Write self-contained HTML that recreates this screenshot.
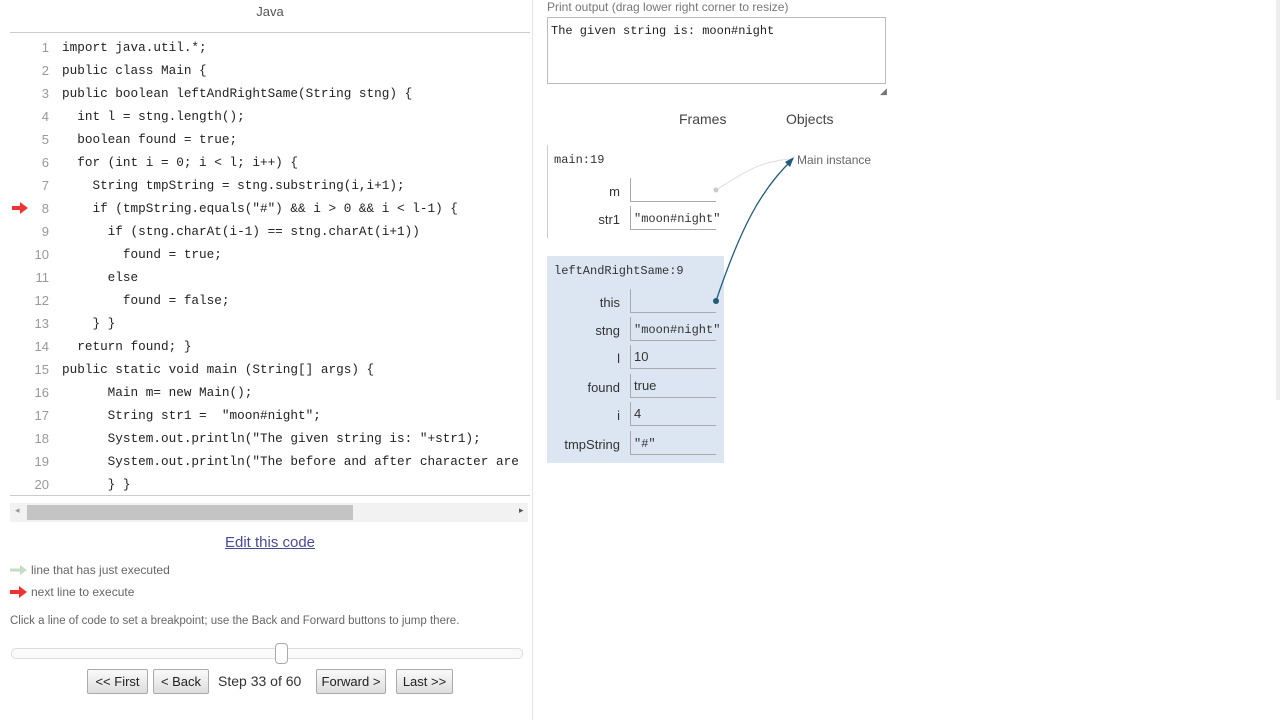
<!DOCTYPE html>
<html><head><style>
body{margin:0;width:1280px;height:720px;background:#fff;font-family:"Liberation Sans",sans-serif;position:relative;overflow:hidden;color:#333}
.a{position:absolute}
.code{font-family:"Liberation Mono",monospace;font-size:12.7px;color:#222}
.ln{position:absolute;left:20px;width:29px;text-align:right;font-family:"Liberation Sans",sans-serif;font-size:13px;color:#999}
.cl{position:absolute;left:62px;white-space:pre}
.btn{position:absolute;top:669px;height:23px;border:1px solid #aaa;background:linear-gradient(#fafafa,#ddd);font-size:13px;line-height:23px;text-align:center;color:#222;border-radius:2px}
.lab{position:absolute;width:70px;text-align:right;font-size:13px;color:#333}
.val{position:absolute;left:630px;width:86px;height:24px;border-left:1px solid #aaa;border-bottom:1px solid #aaa;font-size:13px;line-height:24px;padding-left:3px;box-sizing:border-box}
.mono{font-family:"Liberation Mono",monospace;font-size:12px}
</style></head><body>
<div class="a" style="left:0;top:4px;width:540px;text-align:center;font-size:13px;color:#555">Java</div>
<div class="a" style="left:10px;top:32px;width:520px;height:1px;background:#ccc"></div>
<div class="a" style="left:532px;top:0;width:1px;height:720px;background:#e4e4e4"></div>
<div class="a" style="left:1276px;top:0;width:4px;height:400px;background:#eee"></div>
<div class="code a" style="left:0;top:36px;line-height:23px;width:530px;height:459px;overflow:hidden">
<div class="ln" style="top:0">1</div><div class="cl" style="top:0">import java.util.*;</div>
<div class="ln" style="top:23px">2</div><div class="cl" style="top:23px">public class Main {</div>
<div class="ln" style="top:46px">3</div><div class="cl" style="top:46px">public boolean leftAndRightSame(String stng) {</div>
<div class="ln" style="top:69px">4</div><div class="cl" style="top:69px">  int l = stng.length();</div>
<div class="ln" style="top:92px">5</div><div class="cl" style="top:92px">  boolean found = true;</div>
<div class="ln" style="top:115px">6</div><div class="cl" style="top:115px">  for (int i = 0; i &lt; l; i++) {</div>
<div class="ln" style="top:138px">7</div><div class="cl" style="top:138px">    String tmpString = stng.substring(i,i+1);</div>
<div class="ln" style="top:161px">8</div><div class="cl" style="top:161px">    if (tmpString.equals("#") &amp;&amp; i &gt; 0 &amp;&amp; i &lt; l-1) {</div>
<div class="ln" style="top:184px">9</div><div class="cl" style="top:184px">      if (stng.charAt(i-1) == stng.charAt(i+1))</div>
<div class="ln" style="top:207px">10</div><div class="cl" style="top:207px">        found = true;</div>
<div class="ln" style="top:230px">11</div><div class="cl" style="top:230px">      else</div>
<div class="ln" style="top:253px">12</div><div class="cl" style="top:253px">        found = false;</div>
<div class="ln" style="top:276px">13</div><div class="cl" style="top:276px">    } }</div>
<div class="ln" style="top:299px">14</div><div class="cl" style="top:299px">  return found; }</div>
<div class="ln" style="top:322px">15</div><div class="cl" style="top:322px">public static void main (String[] args) {</div>
<div class="ln" style="top:345px">16</div><div class="cl" style="top:345px">      Main m= new Main();</div>
<div class="ln" style="top:368px">17</div><div class="cl" style="top:368px">      String str1 =  "moon#night";</div>
<div class="ln" style="top:391px">18</div><div class="cl" style="top:391px">      System.out.println("The given string is: "+str1);</div>
<div class="ln" style="top:414px">19</div><div class="cl" style="top:414px;width:460px;overflow:hidden">      System.out.println("The before and after character are</div>
<div class="ln" style="top:437px">20</div><div class="cl" style="top:437px">      } }</div>
</div>
<div class="a" style="left:10px;top:495px;width:520px;height:1px;background:#ccc"></div>
<div class="a" style="left:10px;top:503px;width:518px;height:19px;background:#f2f2f2"></div>
<div class="a" style="left:27px;top:505px;width:326px;height:15px;background:#c4c4c4"></div>
<div class="a" style="left:15px;top:505px;font-size:9px;color:#999">◂</div>
<div class="a" style="left:519px;top:505px;font-size:9px;color:#555">▸</div>
<div class="a" style="left:0;top:534px;width:540px;text-align:center;font-size:15px;color:#4a4a9a;text-decoration:underline">Edit this code</div>
<div class="a" style="left:31px;top:563px;font-size:12px;color:#666">line that has just executed</div>
<div class="a" style="left:31px;top:585px;font-size:12px;color:#666">next line to execute</div>
<div class="a" style="left:10px;top:615px;font-size:11.5px;color:#666">Click a line of code to set a breakpoint; use the Back and Forward buttons to jump there.</div>
<div class="a" style="left:11px;top:648px;width:510px;height:9px;border:1px solid #ddd;border-radius:5px;background:#fafafa"></div>
<div class="a" style="left:275px;top:643px;width:11px;height:19px;border:1px solid #aaa;border-radius:4px;background:#fff"></div>
<div class="btn" style="left:87px;width:59px">&lt;&lt; First</div>
<div class="btn" style="left:153px;width:54px">&lt; Back</div>
<div class="a" style="left:218px;top:673px;font-size:14px;color:#333">Step 33 of 60</div>
<div class="btn" style="left:316px;width:68px">Forward &gt;</div>
<div class="btn" style="left:396px;width:55px">Last &gt;&gt;</div>
<div class="a" style="left:547px;top:0;font-size:12px;color:#777">Print output (drag lower right corner to resize)</div>
<div class="a" style="left:547px;top:17px;width:337px;height:65px;border:1px solid #bbb"></div>
<div class="a mono" style="left:551px;top:24px;color:#222">The given string is: moon#night</div>
<div class="a" style="left:880px;top:86px;font-size:9px;color:#777">◢</div>
<div class="a" style="left:679px;top:111px;font-size:14px;color:#444">Frames</div>
<div class="a" style="left:786px;top:111px;font-size:14px;color:#444">Objects</div>
<div class="a" style="left:547px;top:145px;width:1px;height:93px;background:#ccc"></div>
<div class="a mono" style="left:554px;top:153px;color:#333">main:19</div>
<div class="lab" style="left:550px;top:184px">m</div>
<div class="val" style="top:178px"></div>
<div class="lab" style="left:550px;top:212px">str1</div>
<div class="val mono" style="top:206px;line-height:26px">"moon#night"</div>
<div class="a" style="left:547px;top:256px;width:177px;height:207px;background:#dce6f2"></div>
<div class="a mono" style="left:554px;top:264px;color:#333">leftAndRightSame:9</div>
<div class="lab" style="left:550px;top:295px">this</div><div class="val" style="top:289px"></div>
<div class="lab" style="left:550px;top:323px">stng</div><div class="val mono" style="top:317px;line-height:26px">"moon#night"</div>
<div class="lab" style="left:550px;top:351px">l</div><div class="val" style="top:345px">10</div>
<div class="lab" style="left:550px;top:380px">found</div><div class="val" style="top:374px">true</div>
<div class="lab" style="left:550px;top:408px">i</div><div class="val" style="top:402px">4</div>
<div class="lab" style="left:550px;top:437px">tmpString</div><div class="val mono" style="top:431px;line-height:26px">"#"</div>
<div class="a" style="left:797px;top:153px;font-size:12px;color:#666">Main instance</div>
<svg class="a" style="left:0;top:0" width="1280" height="720">
<path d="M10 570 H21" stroke="#c5dcc5" stroke-width="3"/><path d="M20 565 L27 570 L20 575 Z" fill="#c5dcc5"/>
<path d="M10 592 H21" stroke="#e33" stroke-width="4"/><path d="M19 586 L27 592 L19 598 Z" fill="#e33"/>
<path d="M716 190 C740 175 760 160 793 159" fill="none" stroke="#ddd" stroke-width="1"/>
<circle cx="716" cy="190" r="2.5" fill="#ccc"/>
<path d="M716 301 C740 230 760 190 793 159" fill="none" stroke="#1f5c7a" stroke-width="1.3"/>
<circle cx="716" cy="301" r="3" fill="#1f5c7a"/>
<path d="M785 162 L794 157 L790 167 Z" fill="#1f5c7a"/>
<path d="M12 208 H22" stroke="#e33" stroke-width="4"/><path d="M20 202 L28 208 L20 214 Z" fill="#e33"/>
</svg>
</body></html>
